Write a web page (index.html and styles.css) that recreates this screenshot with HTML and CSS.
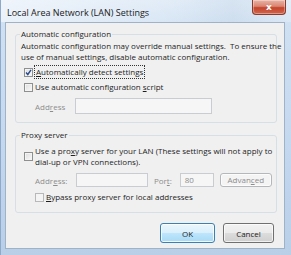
FILE: index.html
```html
<!DOCTYPE html>
<html>
<head>
<title>Local Area Network (LAN) Settings</title>
<link rel="stylesheet" href="styles.css">
</head>
<body>
    <div class="window">
        <div class="titlebar">
            <span class="title">Local Area Network (LAN) Settings</span>
            <button class="close">x</button>
        </div>

        <div class="client">
            <fieldset class="group auto">
                <legend>Automatic configuration</legend>
                <p class="desc">Automatic configuration may override manual settings.&nbsp; To ensure the<br>use of manual settings, disable automatic configuration.</p>
                <label class="check first">
                    <span class="box checked">
                        <svg width="7" height="7" viewBox="0 0 7 7"><path d="M1 3.5 L2.8 5.5 L6 0.8" fill="none" stroke="#2b4a8b" stroke-width="1.4"/></svg>
                    </span>
                    <span class="focus"><u>A</u>utomatically detect settings</span>
                </label>
                <label class="check">
                    <span class="box"></span>
                    <span>Use automatic configuration <u>s</u>cript</span>
                </label>
                <div class="field-row">
                    <span class="field-label">Add<u>r</u>ess</span>
                    <span class="input script-address"></span>
                </div>
            </fieldset>

            <fieldset class="group proxy">
                <legend>Proxy server</legend>
                <label class="check two-line">
                    <span class="box"></span>
                    <span>Use a pro<u>x</u>y server for your LAN (These settings will not apply to<br>dial-up or VPN connections).</span>
                </label>
                <div class="field-row proxy-row">
                    <span class="field-label">Addr<u>e</u>ss:</span>
                    <span class="input proxy-address"></span>
                    <span class="field-label port-label">Por<u>t</u>:</span>
                    <span class="input port">80</span>
                    <button class="btn advanced" disabled>Advan<u>c</u>ed</button>
                </div>
                <label class="check bypass">
                    <span class="box disabled"></span>
                    <span><u>B</u>ypass proxy server for local addresses</span>
                </label>
            </fieldset>

            <div class="actions">
                <button class="btn default">OK</button>
                <button class="btn">Cancel</button>
            </div>
        </div>
    </div>
</body>
</html>
```

FILE: styles.css
```css
body {
    margin: 0;
    padding: 0;
    font-family: "Open Sans", "Noto Sans", sans-serif;
    font-size: 8px;
    color: #1e1e1e;
}

.window {
    width: 291px;
    height: 255px;
    box-sizing: border-box;
    background: linear-gradient(to bottom, #dde9f6 0%, #cfe0f2 10%, #c3d7ee 60%, #b9cfe8 100%);
    border-left: 1px solid #8ea9c9;
    display: flex;
    flex-direction: column;
}

.titlebar {
    height: 22px;
    display: flex;
    justify-content: space-between;
    align-items: flex-start;
    background: linear-gradient(to right, rgba(255,255,255,0.55), rgba(255,255,255,0.15) 60%, rgba(200,215,230,0.3) 80%, rgba(255,255,255,0.2));
}

.title {
    font-size: 9px;
    line-height: 11px;
    margin: 7px 0 0 6px;
    color: #1a1a1a;
}

.close {
    width: 34px;
    height: 15px;
    margin-right: 5px;
    padding: 0;
    border: 1px solid #8a3b2b;
    border-top: none;
    border-radius: 0 0 4px 4px;
    background: linear-gradient(to bottom, #eab3a6 0%, #d98570 45%, #c3452c 55%, #d0654c 100%);
    color: #fff;
    font-family: "DejaVu Sans", sans-serif;
    font-weight: bold;
    font-size: 9px;
    line-height: 13px;
    box-shadow: inset 0 0 0 1px rgba(255,255,255,0.35);
}

.client {
    height: 227px;
    margin: 0 6px 0 4px;
    box-sizing: border-box;
    background-color: #f0f0f0;
    border: 1px solid #9fb2c7;
    padding-top: 6px;
}

.group {
    margin: 0 7px 0 9px;
    padding: 0 4px 0 5px;
    border: 1px solid #d5dfe5;
    border-radius: 3px;
    min-width: 0;
}

.group legend {
    padding: 0 1px;
    margin-left: -1px;
    line-height: 10px;
}

.group.auto {
    height: 94px;
    box-sizing: border-box;
}

.group.proxy {
    margin-top: 7px;
    height: 83px;
    box-sizing: border-box;
}

.desc {
    margin: 1px 0 0 0;
    line-height: 11px;
    white-space: nowrap;
}

.check {
    display: flex;
    align-items: center;
    line-height: 12px;
    margin-left: 3px;
    white-space: nowrap;
}

.check.first {
    margin-top: 4px;
}

.check + .check {
    margin-top: 3px;
}

.box {
    width: 9px;
    height: 9px;
    box-sizing: border-box;
    border: 1px solid #8e8f8f;
    background: linear-gradient(135deg, #dcdcdc, #fafafa);
    box-shadow: inset 0 0 0 1px #f4f4f4;
    margin-right: 2px;
    display: flex;
    align-items: center;
    justify-content: center;
    flex-shrink: 0;
}

.box.disabled {
    border-color: #b8b8b8;
    background: #f4f4f4;
}

.focus {
    outline: 1px dotted #333;
    outline-offset: 0;
    padding: 0 1px;
}

.field-row {
    display: flex;
    align-items: center;
    margin: 5px 0 0 14px;
}

.field-label {
    color: #8d8d8d;
    width: 40px;
}

.input {
    box-sizing: border-box;
    height: 16px;
    border: 1px solid #c9cdd1;
    background-color: #f6f6f6;
    color: #8d8d8d;
    line-height: 12px;
    padding-left: 4px;
}

.script-address {
    width: 137px;
}

.two-line {
    margin-top: 5px;
    line-height: 11px;
}

.two-line .box {
    align-self: center;
}

.proxy-row {
    margin-top: 6px;
}

.proxy-row .field-label {
    width: 41px;
}

.proxy-row .input {
    height: 14px;
}

.proxy-address {
    width: 73px;
}

.port-label.field-label {
    width: auto;
    margin: 0 8px 0 6px;
}

.port {
    width: 34px;
}

.btn {
    font-family: inherit;
    font-size: 8px;
    color: #1e1e1e;
    height: 20px;
    padding: 0;
    border: 1px solid #707070;
    border-radius: 3px;
    background: linear-gradient(to bottom, #f2f2f2 0%, #ebebeb 50%, #dddddd 50%, #cfcfcf 100%);
    box-shadow: inset 0 0 0 1px rgba(255,255,255,0.7);
}

.btn.advanced {
    width: 53px;
    height: 14px;
    margin-left: 6px;
    line-height: 12px;
    color: #8d8d8d;
    border-color: #b4b8bb;
    background: #f4f4f4;
}

.check.bypass {
    margin: 4px 0 0 14px;
}

.actions {
    display: flex;
    justify-content: flex-end;
    gap: 8px;
    margin: 10px 10px 0 0;
}

.actions .btn {
    width: 51px;
}

.btn.default {
    width: 55px;
    border-color: #3c7fb1;
    background: linear-gradient(to bottom, #eaf6fd 0%, #d9f0fc 50%, #bee6fd 50%, #a7d9f5 100%);
    box-shadow: inset 0 0 0 1px rgba(255,255,255,0.8);
}
```
